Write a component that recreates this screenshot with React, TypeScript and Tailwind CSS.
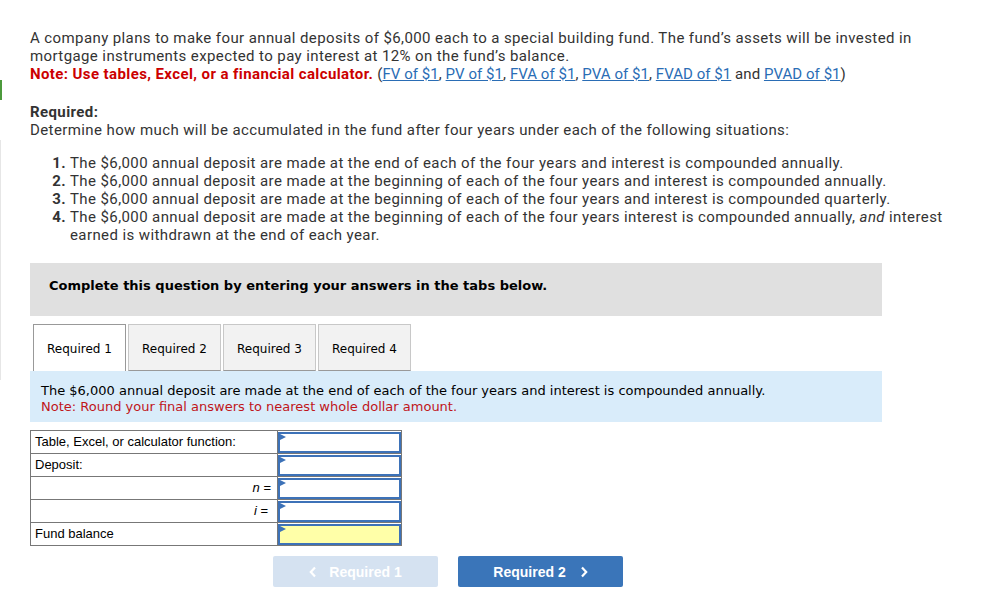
import React from "react";

const body = { fontFamily: "Roboto, Lato, sans-serif" };
const verdana = { fontFamily: "'DejaVu Sans', Verdana, sans-serif" };
const arial = { fontFamily: "'Liberation Sans', Arial, sans-serif" };

const links = ["FV of $1", "PV of $1", "FVA of $1", "PVA of $1", "FVAD of $1"];

const items = [
  "The $6,000 annual deposit are made at the end of each of the four years  and interest is compounded annually.",
  "The $6,000 annual deposit are made at the beginning of each of the four years and interest is compounded annually.",
  "The $6,000 annual deposit are made at the beginning of each of the four years and interest is compounded quarterly.",
];

const tabs = ["Required 1", "Required 2", "Required 3", "Required 4"];

function InputCell({ yellow }: { yellow?: boolean }) {
  return (
    <td className="border border-[#777] p-0 w-[124px]">
      <div
        className={`relative h-[21px] border-2 border-[#3d72b8] ${yellow ? "bg-[#ffffa8]" : "bg-white"}`}
      >
        <span className="absolute left-0 top-0 h-0 w-0 border-y-[3px] border-l-[6px] border-y-transparent border-l-[#3d72b8]" />
      </div>
    </td>
  );
}

export default function App() {
  return (
    <div className="relative min-h-[603px] w-[999px] bg-white text-[#333]" style={body}>
      <span className="absolute left-0 top-[80px] h-[20px] w-[2px] bg-[#4c9a3c]" />
      <span className="absolute left-0 top-[140px] h-[240px] w-[1px] bg-[#e6e6e6]" />

      <div className="pl-[30px] pt-[29px]">
        <div className="text-[15px] leading-[18px] tracking-[0.4px]">
          <p className="whitespace-nowrap">
            A company plans to make four annual deposits of $6,000 each to a special building fund. The fund’s assets will be invested in
          </p>
          <p className="whitespace-nowrap">
            mortgage instruments expected to pay interest at 12% on the fund’s balance.
          </p>
          <p className="whitespace-nowrap">
            <b className="text-[#c00]">Note: Use tables, Excel, or a financial calculator.</b>{" "}
            <span className="tracking-[0.05px]">
              (
              {links.map((l, i) => (
                <React.Fragment key={l}>
                  <a className="text-[#2a6db5] underline">{l}</a>
                  {i < links.length - 1 ? ", " : ""}
                </React.Fragment>
              ))}{" "}
              and <a className="text-[#2a6db5] underline">PVAD of $1</a>)
            </span>
          </p>

          <p className="mt-[20px] font-bold">Required:</p>
          <p>Determine how much will be accumulated in the fund after four years under each of the following situations:</p>

          <ol className="mt-[15px] pl-[19px]">
            {items.map((t, i) => (
              <li key={i} className="flex whitespace-nowrap">
                <b className="w-[21px] text-right pr-[4px] shrink-0">{i + 1}.</b>
                <span>{t}</span>
              </li>
            ))}
            <li className="flex">
              <b className="w-[21px] text-right pr-[4px] shrink-0">4.</b>
              <span className="whitespace-nowrap">
                The $6,000 annual deposit are made at the beginning of each of the four years interest is compounded annually,{" "}
                <i>and</i> interest
                <br />
                earned is withdrawn at the end of each year.
              </span>
            </li>
          </ol>
        </div>

        <div className="mt-[19px] flex h-[53px] w-[852px] items-center bg-[#e0e0e0] pb-[8px] pl-[19px]" style={verdana}>
          <span className="text-[13px] font-bold text-black">Complete this question by entering your answers in the tabs below.</span>
        </div>

        <div className="mt-[8px] flex w-[852px] items-end pl-[3px]" style={verdana}>
          {tabs.map((t, i) => (
            <div
              key={t}
              className={`mr-[2px] flex h-[47px] w-[93px] items-center justify-center pt-[2px] text-[12px] text-black ${
                i === 0
                  ? "border border-b-0 border-[#999] bg-white"
                  : "border border-[#c8c8c8] border-b-[#999] bg-[#f2f2f2]"
              }`}
            >
              {t}
            </div>
          ))}
        </div>

        <div className="flex h-[51px] w-[852px] flex-col justify-center bg-[#d9ecfa] pl-[11px] pt-[4px] text-[13px] leading-[16px]" style={verdana}>
          <p className="text-black">The $6,000 annual deposit are made at the end of each of the four years and interest is compounded annually.</p>
          <p className="text-[#c0161a]">Note: Round your final answers to nearest whole dollar amount.</p>
        </div>

        <table className="mt-[8px] border-collapse text-[13px] text-black" style={arial}>
          <tbody>
            <tr className="h-[23px]">
              <td className="w-[247px] border border-[#777] px-[4px] whitespace-nowrap">Table, Excel, or calculator function:</td>
              <InputCell />
            </tr>
            <tr className="h-[23px]">
              <td className="border border-[#777] px-[4px]">Deposit:</td>
              <InputCell />
            </tr>
            <tr className="h-[23px]">
              <td className="border border-[#777] px-[6px] text-right">
                <i>n</i> =
              </td>
              <InputCell />
            </tr>
            <tr className="h-[23px]">
              <td className="border border-[#777] px-[9px] text-right">
                <i>i</i> =
              </td>
              <InputCell />
            </tr>
            <tr className="h-[23px]">
              <td className="border border-[#777] px-[4px]">Fund balance</td>
              <InputCell yellow />
            </tr>
          </tbody>
        </table>

        <div className="mt-[10px] flex gap-[20px] pl-[243px]" style={arial}>
          <button className="flex h-[31px] w-[165px] items-center justify-center gap-[12px] rounded-[2px] bg-[#d5e2f1] pt-[1px] text-[14px] font-bold text-white">
            <svg width="8" height="12" viewBox="0 0 8 12" fill="none" stroke="white" strokeWidth="2.2">
              <path d="M6 1.5 1.8 6 6 10.5" />
            </svg>
            Required 1
          </button>
          <button className="flex h-[31px] w-[165px] items-center justify-center gap-[14px] rounded-[2px] bg-[#3a75b9] pt-[1px] text-[14px] font-bold text-white">
            Required 2
            <svg width="8" height="12" viewBox="0 0 8 12" fill="none" stroke="white" strokeWidth="2.2">
              <path d="M2 1.5 6.2 6 2 10.5" />
            </svg>
          </button>
        </div>
      </div>
    </div>
  );
}
